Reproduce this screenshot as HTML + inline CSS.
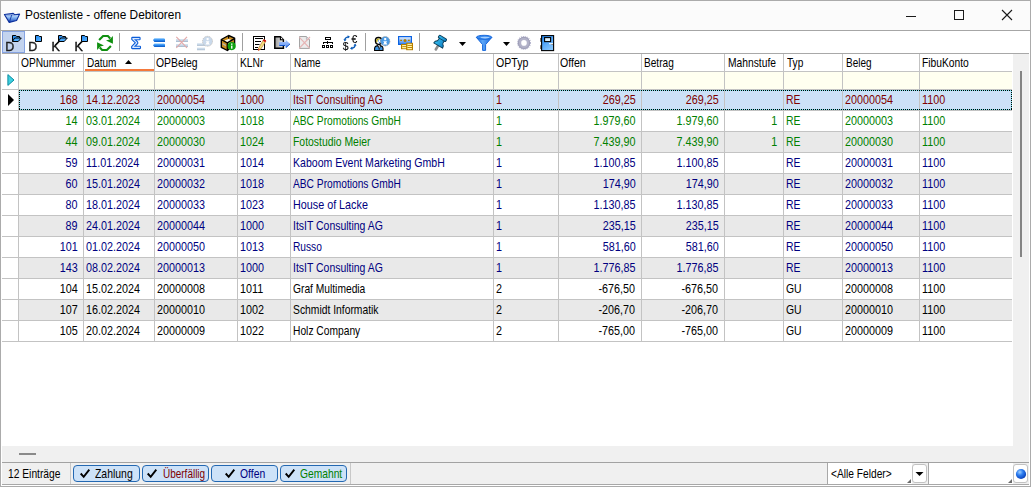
<!DOCTYPE html>
<html lang="de"><head><meta charset="utf-8"><title>Postenliste - offene Debitoren</title>
<style>
html,body{margin:0;padding:0;background:#fff}
body{width:1031px;height:487px;position:relative;overflow:hidden;font-family:"Liberation Sans",Arial,sans-serif}
#w{position:absolute;left:0;top:0;width:1031px;height:487px;overflow:hidden}
#w>div,#w>span,#w>svg{position:absolute;display:block}
.t{white-space:nowrap}
.focus{box-sizing:border-box;background:
 repeating-linear-gradient(90deg,#000 0 1px,#7fe6f2 1px 2px) top/100% 1px no-repeat,
 repeating-linear-gradient(90deg,#000 0 1px,#7fe6f2 1px 2px) bottom/100% 1px no-repeat,
 repeating-linear-gradient(180deg,#000 0 1px,#7fe6f2 1px 2px) left/1px 100% no-repeat,
 repeating-linear-gradient(180deg,#000 0 1px,#7fe6f2 1px 2px) right/1px 100% no-repeat}
.btn{box-sizing:border-box;border:1px solid #2368b2;border-radius:4px;background:#cde2f8}
</style></head><body><div id="w">
<div style="left:0px;top:0px;width:1031px;height:487px;background:#ababab;"></div>
<div style="left:1px;top:1px;width:1029px;height:29px;background:#fbfbfb;"></div>
<div style="left:1px;top:30px;width:1029px;height:1px;background:#a6a6a6;"></div>
<div style="left:1px;top:31px;width:1029px;height:22px;background:#ffffff;"></div>
<div style="left:2px;top:53px;width:1027px;height:1px;background:#a8a8a8;"></div>
<div style="left:2px;top:54px;width:1027px;height:392px;background:#f0f0f0;"></div>
<div style="left:1px;top:54px;width:1012px;height:392px;background:#ffffff;"></div>
<div style="left:2px;top:446px;width:1027px;height:16px;background:#f0f0f0;"></div>
<div style="left:19px;top:453px;width:17px;height:2px;background:#8a8a8a;"></div>
<div style="left:2px;top:462px;width:1027px;height:1px;background:#a2a2a2;"></div>
<div style="left:2px;top:463px;width:1027px;height:21px;background:#f0f0f0;"></div>
<div style="left:2px;top:484px;width:1027px;height:1px;background:#a8a8a8;"></div>
<div style="left:1px;top:485px;width:1029px;height:1px;background:#ffffff;"></div>
<div style="left:1px;top:31px;width:1px;height:455px;background:#ffffff;"></div>
<div style="left:1029px;top:31px;width:1px;height:455px;background:#ffffff;"></div>
<svg style="left:3px;top:11px" width="19" height="14" viewBox="3 11 19 14">
<defs><linearGradient id="tf" x1="0" y1="0" x2="0" y2="1"><stop offset="0" stop-color="#eaf3ff"/><stop offset="0.45" stop-color="#8ab8f2"/><stop offset="1" stop-color="#1648bc"/></linearGradient></defs>
<path d="M4.4 14.5 L13.2 13.4 L14.6 14.7 L19.6 14.1 L16.6 20.5 L9.2 22.4 Z" fill="url(#tf)" stroke="#0c2f9c" stroke-width="1.1" stroke-linejoin="round"/>
<path d="M11.7 15 L9.5 21.9" fill="none" stroke="#1038a4" stroke-width="0.9"/>
<path d="M5.2 14.9 L11.7 15 L14.4 14.9" fill="none" stroke="#2a56b8" stroke-width="0.6"/>
</svg>

<span class="t" style="left:24.7px;top:0px;line-height:30px;height:30px;font-size:12px;color:#000;transform:scaleX(0.988);transform-origin:0 50%">Postenliste - offene Debitoren</span>
<div style="left:906px;top:16px;width:10px;height:1px;background:#1a1a1a;"></div>
<div style="left:954px;top:10px;width:8px;height:8px;border:1px solid #1a1a1a;background:transparent"></div>
<svg style="left:1001px;top:9px" width="12" height="12" viewBox="0 0 12 12"><path d="M1 1 L11 11 M11 1 L1 11" stroke="#1a1a1a" stroke-width="1.1" fill="none"/></svg>
<div style="left:2px;top:31px;width:23px;height:22px;background:#c3d3ef;box-sizing:border-box;border:1px solid #86a3e2;"></div>
<div style="left:119px;top:33px;width:1px;height:18px;background:#a0a0a0;"></div>
<div style="left:242px;top:33px;width:1px;height:18px;background:#a0a0a0;"></div>
<div style="left:365px;top:33px;width:1px;height:18px;background:#a0a0a0;"></div>
<div style="left:419px;top:33px;width:1px;height:18px;background:#a0a0a0;"></div>
<svg style="left:0;top:31px;will-change:transform" width="1031" height="22" viewBox="0 0 1031 22" font-family="Liberation Sans, Arial, sans-serif">
<defs>
<linearGradient id="fo" x1="0" y1="0" x2="1" y2="1"><stop offset="0" stop-color="#1f86f0"/><stop offset="1" stop-color="#5ab4ff"/></linearGradient>
<linearGradient id="eqg" x1="0" y1="0" x2="0" y2="1"><stop offset="0" stop-color="#7cc2ff"/><stop offset="0.5" stop-color="#2a8af0"/><stop offset="1" stop-color="#0a56c4"/></linearGradient>
<linearGradient id="eqd" x1="0" y1="0" x2="0" y2="1"><stop offset="0" stop-color="#dbe7f2"/><stop offset="0.6" stop-color="#c2d3e4"/><stop offset="1" stop-color="#9fb2c6"/></linearGradient>
<linearGradient id="docg" x1="0" y1="0" x2="1" y2="0"><stop offset="0" stop-color="#9c9c9c"/><stop offset="1" stop-color="#ececec"/></linearGradient>
<linearGradient id="arg" x1="0" y1="0" x2="0" y2="1"><stop offset="0" stop-color="#a9c6fb"/><stop offset="0.6" stop-color="#7ea8f6"/><stop offset="1" stop-color="#0a4fc8"/></linearGradient>
<linearGradient id="cardg" x1="0" y1="0" x2="0" y2="1"><stop offset="0" stop-color="#f4f9ff"/><stop offset="1" stop-color="#2a7ef0"/></linearGradient>
<linearGradient id="nbg" x1="0" y1="0" x2="0.6" y2="1"><stop offset="0" stop-color="#1f86f2"/><stop offset="1" stop-color="#86c6ff"/></linearGradient>
<linearGradient id="fung" x1="0" y1="0" x2="1" y2="0"><stop offset="0" stop-color="#1f74e4"/><stop offset="0.4" stop-color="#5ca6f8"/><stop offset="1" stop-color="#1a68dc"/></linearGradient>
<linearGradient id="ping" x1="0" y1="0" x2="1" y2="0"><stop offset="0" stop-color="#35c0f0"/><stop offset="1" stop-color="#0f7ec4"/></linearGradient>
<radialGradient id="gearg" cx="0.5" cy="0.5" r="0.5"><stop offset="0.45" stop-color="#9c9cb8"/><stop offset="0.7" stop-color="#c6c6d8"/><stop offset="1" stop-color="#a8a8c0"/></radialGradient>
</defs>
<!-- 1: D + open folder -->
<g transform="translate(5,4)"><text x="0.2" y="16" font-size="12.5" fill="#1c1c1c" stroke="#1c1c1c" stroke-width="0.35">D</text><g><path d="M7.5 6.5 V0.5 H10.8 L11.6 1.5 H14.5 V3" fill="url(#fo)" stroke="#000" stroke-width="1"/><path d="M7.5 6.5 L9.6 3 H16.3 L13.2 6.5 Z" fill="#4aa8fa" stroke="#000" stroke-width="1" stroke-linejoin="round"/></g></g>
<!-- 2: D + closed folder -->
<g transform="translate(28,4)"><text x="0.2" y="16" font-size="12.5" fill="#1c1c1c" stroke="#1c1c1c" stroke-width="0.35">D</text><g><path d="M7.5 6.5 V0.5 H10.6 L11.4 1.5 H13.5 V6.5 Z" fill="url(#fo)" stroke="#000" stroke-width="1"/></g></g>
<!-- 3: K + open folder -->
<g transform="translate(51,4)"><path d="M4 10.5 L8.2 6.3" stroke="#111" stroke-width="1.35"/><text x="0.4" y="16" font-size="12.5" fill="#111" stroke="#111" stroke-width="0.4">K</text><g><path d="M7.5 6.5 V0.5 H10.8 L11.6 1.5 H14.5 V3" fill="url(#fo)" stroke="#000" stroke-width="1"/><path d="M7.5 6.5 L9.6 3 H16.3 L13.2 6.5 Z" fill="#4aa8fa" stroke="#000" stroke-width="1" stroke-linejoin="round"/></g></g>
<!-- 4: K + closed folder -->
<g transform="translate(74,4)"><path d="M4 10.5 L8.2 6.3" stroke="#111" stroke-width="1.35"/><text x="0.4" y="16" font-size="12.5" fill="#111" stroke="#111" stroke-width="0.4">K</text><g><path d="M7.5 6.5 V0.5 H10.6 L11.4 1.5 H13.5 V6.5 Z" fill="url(#fo)" stroke="#000" stroke-width="1"/></g></g>
<!-- 5: refresh -->
<g transform="translate(97,4)">
<g><path d="M2.1 5.1 L6.1 1.05 H10.9 L13.2 3.4" fill="none" stroke="#0f8f0f" stroke-width="2.1" stroke-linejoin="miter"/><path d="M15.9 0.9 V8.7 L9 5.4 L12.6 4.4 Z" fill="#0f8f0f"/></g>
<g transform="rotate(180 8 8)"><path d="M2.1 5.1 L6.1 1.05 H10.9 L13.2 3.4" fill="none" stroke="#0f8f0f" stroke-width="2.1" stroke-linejoin="miter"/><path d="M15.9 0.9 V8.7 L9 5.4 L12.6 4.4 Z" fill="#0f8f0f"/></g>
</g>
<!-- 6: sigma -->
<g transform="translate(128,4)"><text x="3.4" y="13.1" font-size="14.5" fill="#d8e8ff" stroke="#0a5cd8" stroke-width="2.3" stroke-linejoin="round" paint-order="stroke">Σ</text></g>
<!-- 7: equals -->
<g transform="translate(151,4)"><path d="M2 5 L3.4 3.2 H13 L14 4 V7 H3.4 Z" fill="url(#eqg)"/><path d="M2 10.2 L3.4 8.4 H13 L14 9.2 V12 H3.4 Z" fill="url(#eqg)"/></g>
<!-- 8: disabled equals with X -->
<g transform="translate(174,4)"><rect x="2" y="4" width="12" height="3" fill="url(#eqd)"/><rect x="2" y="9" width="12" height="3" fill="url(#eqd)"/><path d="M2.3 1.8 L13 12.8 M13 1.8 L2.3 12.8" stroke="#e2aaaa" stroke-width="1.2" fill="none"/></g>
<!-- 9: disabled bars + person circle -->
<g transform="translate(197,4)"><rect x="0" y="8.2" width="8" height="2.6" fill="url(#eqd)"/><rect x="0" y="12.6" width="8" height="2.6" fill="url(#eqd)"/><circle cx="10.5" cy="6.3" r="5" fill="#c9d9eb" stroke="#bdb6ae" stroke-width="0.8" stroke-dasharray="1.2 1"/><rect x="9.6" y="3" width="2" height="2.2" fill="#fff"/><path d="M8.6 6.2 H12.6 L11.6 7.6 L12.8 9.4 H8.4 L9.6 7.6 Z" fill="#fff"/></g>
<!-- 10: box with info -->
<g transform="translate(220,4)">
<path d="M1.3 4.5 L8.6 0.5 L14.6 3.2 V9 L7.4 15.5 L1.3 12.4 Z" fill="#c98d1e" stroke="#000" stroke-width="1.4" stroke-linejoin="round"/>
<path d="M4.6 5.6 L8.6 4 L11.8 5.2 L7.6 7.4 Z" fill="#fff"/>
<path d="M8.6 0.8 V3.6" stroke="#000" stroke-width="1.2" fill="none"/>
<path d="M1.5 4.7 L7.3 7.9 V15.2 M7.3 7.9 L14.4 3.6" stroke="#000" stroke-width="1.3" fill="none"/>
<path d="M2.6 8 L5.8 9.8 V11.3 L2.6 9.5 Z" fill="#b8b8b8"/>
<path d="M8.2 8.4 L11 6.8 V9 L8.2 11 Z" fill="#f4f4f4"/>
<circle cx="11.7" cy="11.1" r="4.1" fill="#10a010"/><rect x="11.05" y="8.5" width="1.4" height="1.3" fill="#fff"/><rect x="11.05" y="10.6" width="1.4" height="3.1" fill="#fff"/>
</g>
<!-- 11: document + pencil -->
<g transform="translate(251,4)">
<rect x="2.5" y="1.5" width="11" height="13" fill="#fff" stroke="#000" stroke-width="1"/>
<path d="M4 3.5 H12 M4 6.5 H10 M4 9.5 H8.5 M4 12.5 H7" stroke="#000" stroke-width="1"/>
<path d="M12.6 4.6 L15 6 L9.6 14.2 L7.4 15.6 L7.6 13 Z" fill="#f0e27e" stroke="#c8884a" stroke-width="0.8" stroke-linejoin="round"/>
<path d="M12.8 4.2 L15.2 5.6 L14.2 7.2 L11.8 5.8 Z" fill="#d01414"/>
<path d="M7.5 13.6 L8.9 14.6 L7.2 15.8 Z" fill="#e02020"/>
</g>
<!-- 12: document with arrow -->
<g transform="translate(274,4)">
<path d="M0.8 1.8 H6.4 L9.4 4.8 V13.2 H0.8 Z" fill="url(#docg)" stroke="#000" stroke-width="1.5" stroke-linejoin="miter"/>
<path d="M6.4 1.8 V4.8 H9.4" fill="#fff" stroke="#000" stroke-width="1.1"/>
<path d="M5 7 H11.6 V4.8 L16 8.8 L11.6 12.8 V10.6 H5 Z" fill="url(#arg)"/>
<path d="M5.4 10.5 H11 M16 8.9 L12 12.6" stroke="#0a4fc8" stroke-width="1" fill="none"/>
</g>
<!-- 13: disabled document with X -->
<g transform="translate(297,4)">
<path d="M2.5 1.5 H9.4 L12.5 4.4 V13.4 H2.5 Z" fill="#ececec" stroke="#a4a4a4" stroke-width="1"/>
<path d="M9.4 1.6 V4.4 H12.4" fill="#dfe3ee" stroke="#b0b0b0" stroke-width="0.8"/>
<path d="M2.4 2.4 L12.6 13.2 M13 2 L2.4 13.2" stroke="#e6b4b4" stroke-width="1.2" fill="none"/>
</g>
<!-- 14: org chart -->
<g transform="translate(320,4)" shape-rendering="crispEdges" fill="none" stroke="#000">
<rect x="5.5" y="2.5" width="5" height="2" stroke-width="1"/>
<path d="M7.5 6 V9 M3.5 9 V7.5 H12.5 V9" stroke-width="1"/>
<rect x="2.5" y="10.5" width="2" height="2"/><rect x="6.5" y="10.5" width="2" height="2"/><rect x="10.5" y="10.5" width="2" height="2"/>
</g>
<!-- 15: currency -->
<g transform="translate(343,4)">
<text x="8.6" y="7.8" font-size="10.4" fill="#000" stroke="#000" stroke-width="0.12">€</text>
<text x="-0.3" y="15.4" font-size="10.4" fill="#000" stroke="#000" stroke-width="0.12">$</text>
<path d="M1.8 5 Q2 2.2 5.4 1.8" stroke="#0a5ab8" stroke-width="1.3" fill="none"/><path d="M4.6 0.2 L7 1.8 L4.8 3.6 Z M0.4 4.2 L3.6 4.4 L1.8 6.6 Z" fill="#0a5ab8"/>
<path d="M12.2 10 Q12 12.8 8.6 13.4" stroke="#0a5ab8" stroke-width="1.3" fill="none"/><path d="M9.4 15 L7 13.4 L9.2 11.6 Z M13.6 10.8 L10.4 10.6 L12.2 8.4 Z" fill="#0a5ab8"/>
</g>
<!-- 16: person with badge -->
<g transform="translate(374,4)">
<path d="M1.5 5.6 Q1.3 2.5 4.4 2.4 Q7.6 2.3 7.6 5.6 V7.2 Q7 9.4 4.6 9.4 Q2.1 9.3 1.7 7.2 Z" fill="#fff" stroke="#000" stroke-width="1.5"/>
<path d="M2.3 7 V5.2 Q2.5 3.4 4.4 3.4 Q5.8 3.4 6.4 4.2 Q4.2 4.2 3.5 5.6 L3.3 7.2 Z" fill="#b4a400"/>
<rect x="4" y="5.4" width="1" height="1" fill="#1a6ad8"/><rect x="6" y="5.4" width="1" height="1" fill="#1a6ad8"/><rect x="5" y="7.2" width="1" height="1.1" fill="#1a6ad8"/>
<path d="M0.6 15.5 V13 Q0.8 11.2 3.4 10.6 L5 12.2 L6.2 10.6 Q8.8 11.2 9 13 V15.5 Z" fill="#3c92e2" stroke="#000" stroke-width="1.1"/>
<path d="M4.4 11 L5.2 14.6 L6.4 11" fill="#d8ecff" stroke="#000" stroke-width="0.6"/>
<circle cx="11.2" cy="6.3" r="4.7" fill="#4a9ae4" stroke="#a8a098" stroke-width="0.8" stroke-dasharray="1.2 1"/>
<rect x="10.2" y="3" width="2" height="2.2" fill="#fff"/><path d="M9.2 6.2 H13.2 L12.2 7.6 L13.4 9.4 H9 L10.2 7.6 Z" fill="#fff"/>
</g>
<!-- 17: card with coins -->
<g transform="translate(397,4)">
<rect x="1.6" y="1.6" width="12.8" height="7.8" fill="url(#cardg)" stroke="#0a62e2" stroke-width="1.2"/>
<path d="M3.2 5.4 H5 M11 5.4 H12.8" stroke="#b47c00" stroke-width="1.1"/><circle cx="8" cy="5.4" r="1.5" fill="#b47c00"/>
<rect x="4.5" y="9.5" width="5.4" height="4.2" fill="#ffe65a" stroke="#b47c00" stroke-width="1"/>
<path d="M5.4 11.6 H9.4" stroke="#b47c00" stroke-width="0.9"/><path d="M5.6 10.6 H9 M5.6 12.7 H9" stroke="#fffbe0" stroke-width="0.7"/>
<rect x="9.7" y="8.3" width="5.8" height="6.4" fill="#ffe65a" stroke="#b47c00" stroke-width="1"/>
<path d="M10.4 10.4 H15 M10.4 12.5 H15" stroke="#b47c00" stroke-width="0.9"/><path d="M10.8 9.4 H14.6 M10.8 11.5 H14.6 M10.8 13.6 H14.6" stroke="#fffbe0" stroke-width="0.7"/>
</g>
<!-- 18: pin -->
<g transform="translate(442.9,6.65) rotate(31)">
<path d="M0 9 V13.8" stroke="#8e8e8e" stroke-width="2.6" stroke-linecap="round"/>
<path d="M-4.3 0.2 Q-4.3 -0.5 -3.4 -0.5 H3.4 Q4.3 -0.5 4.3 0.2 V1.6 Q4.3 2.3 3.4 2.3 H2.7 L3 5.4 Q5.2 6.6 5.2 9.2 H-5.2 Q-5.2 6.6 -3 5.4 L-2.7 2.3 H-3.4 Q-4.3 2.3 -4.3 1.6 Z" fill="url(#ping)" stroke="#083a56" stroke-width="0.9" stroke-linejoin="round"/>
<path d="M-3.6 2.3 H3.6" stroke="#083a56" stroke-width="0.7"/>
</g>
<g transform="translate(459,11)"><path d="M0 0 H7 L3.5 4 Z" fill="#000"/></g>
<!-- 19: funnel -->
<g transform="translate(476,4)">
<path d="M0.4 2.4 L6.6 9.6 V15.4 H9.6 V9.6 L15.8 2.4 Z" fill="url(#fung)" stroke="#1868dc" stroke-width="1" stroke-linejoin="round"/>
<ellipse cx="8.1" cy="2.3" rx="7.7" ry="2" fill="#3a8cf0" stroke="#1868dc" stroke-width="1"/>
<ellipse cx="9" cy="2.6" rx="4.6" ry="0.8" fill="#a4ceff"/>
</g>
<g transform="translate(503,11)"><path d="M0 0 H7 L3.5 4 Z" fill="#000"/></g>
<!-- 20: gear (disabled) -->
<g transform="translate(516,4)">
<circle cx="8" cy="7.9" r="6.3" fill="none" stroke="#b4b4cc" stroke-width="1.4" stroke-dasharray="1.1 0.88"/>
<circle cx="8" cy="7.9" r="4.4" fill="none" stroke="url(#gearg)" stroke-width="3.2"/>
<circle cx="8" cy="7.9" r="4.5" fill="none" stroke="#b2b2c8" stroke-width="2.8"/>
<circle cx="8" cy="7.9" r="5.6" fill="none" stroke="#9c9cb6" stroke-width="0.9"/>
</g>
<!-- 21: notebook -->
<g transform="translate(539,4)">
<rect x="1" y="3" width="2" height="3.8" fill="#7c746c"/><rect x="1" y="10.2" width="2" height="3.8" fill="#7c746c"/>
<rect x="2.6" y="0.6" width="12" height="15" fill="url(#nbg)" stroke="#000" stroke-width="1.1"/>
<rect x="5.6" y="2.6" width="6" height="4" fill="#dcf2ff" stroke="#000" stroke-width="1.1"/>
<rect x="10" y="8.2" width="4" height="1" fill="#fff"/><rect x="12.4" y="9.2" width="1.6" height="0.8" fill="#8c7c6c"/>
</g>
</svg>

<div style="left:2px;top:71px;width:1010px;height:1px;background:#c3c3c3;"></div>
<div style="left:19px;top:72px;width:993px;height:17px;background:#fffff0;"></div>
<div style="left:2px;top:89px;width:1010px;height:1px;background:#c3c3c3;"></div>
<div style="left:19px;top:90px;width:993px;height:20px;background:#cce1f7;"></div>
<div style="left:2px;top:110px;width:1010px;height:1px;background:#c3c3c3;"></div>
<div style="left:2px;top:131px;width:1010px;height:1px;background:#c3c3c3;"></div>
<div style="left:19px;top:132px;width:993px;height:20px;background:#e9e9e9;"></div>
<div style="left:2px;top:152px;width:1010px;height:1px;background:#c3c3c3;"></div>
<div style="left:2px;top:173px;width:1010px;height:1px;background:#c3c3c3;"></div>
<div style="left:19px;top:174px;width:993px;height:20px;background:#e9e9e9;"></div>
<div style="left:2px;top:194px;width:1010px;height:1px;background:#c3c3c3;"></div>
<div style="left:2px;top:215px;width:1010px;height:1px;background:#c3c3c3;"></div>
<div style="left:19px;top:216px;width:993px;height:20px;background:#e9e9e9;"></div>
<div style="left:2px;top:236px;width:1010px;height:1px;background:#c3c3c3;"></div>
<div style="left:2px;top:257px;width:1010px;height:1px;background:#c3c3c3;"></div>
<div style="left:19px;top:258px;width:993px;height:20px;background:#e9e9e9;"></div>
<div style="left:2px;top:278px;width:1010px;height:1px;background:#c3c3c3;"></div>
<div style="left:2px;top:299px;width:1010px;height:1px;background:#c3c3c3;"></div>
<div style="left:19px;top:300px;width:993px;height:20px;background:#e9e9e9;"></div>
<div style="left:2px;top:320px;width:1010px;height:1px;background:#c3c3c3;"></div>
<div style="left:2px;top:341px;width:1010px;height:1px;background:#c3c3c3;"></div>
<div style="left:18px;top:54px;width:1px;height:287px;background:#c3c3c3;"></div>
<div style="left:83px;top:54px;width:1px;height:287px;background:#c3c3c3;"></div>
<div style="left:154px;top:54px;width:1px;height:287px;background:#c3c3c3;"></div>
<div style="left:237px;top:54px;width:1px;height:287px;background:#c3c3c3;"></div>
<div style="left:290px;top:54px;width:1px;height:287px;background:#c3c3c3;"></div>
<div style="left:493px;top:54px;width:1px;height:287px;background:#c3c3c3;"></div>
<div style="left:558px;top:54px;width:1px;height:287px;background:#c3c3c3;"></div>
<div style="left:641px;top:54px;width:1px;height:287px;background:#c3c3c3;"></div>
<div style="left:724px;top:54px;width:1px;height:287px;background:#c3c3c3;"></div>
<div style="left:783px;top:54px;width:1px;height:287px;background:#c3c3c3;"></div>
<div style="left:842px;top:54px;width:1px;height:287px;background:#c3c3c3;"></div>
<div style="left:919px;top:54px;width:1px;height:287px;background:#c3c3c3;"></div>
<div class="focus" style="left:19px;top:90px;width:993px;height:20px"></div>
<span class="t" style="left:20.70px;top:54px;line-height:17px;height:17px;color:#000;font-size:13px;transform:scaleX(0.7840);transform-origin:0 50%;">OPNummer</span>
<span class="t" style="left:86.60px;top:54px;line-height:17px;height:17px;color:#000;font-size:13px;transform:scaleX(0.7686);transform-origin:0 50%;">Datum</span>
<span class="t" style="left:156.40px;top:54px;line-height:17px;height:17px;color:#000;font-size:13px;transform:scaleX(0.8000);transform-origin:0 50%;">OPBeleg</span>
<span class="t" style="left:240.10px;top:54px;line-height:17px;height:17px;color:#000;font-size:13px;transform:scaleX(0.7899);transform-origin:0 50%;">KLNr</span>
<span class="t" style="left:293.60px;top:54px;line-height:17px;height:17px;color:#000;font-size:13px;transform:scaleX(0.7625);transform-origin:0 50%;">Name</span>
<span class="t" style="left:495.60px;top:54px;line-height:17px;height:17px;color:#000;font-size:13px;transform:scaleX(0.8126);transform-origin:0 50%;">OPTyp</span>
<span class="t" style="left:560.30px;top:54px;line-height:17px;height:17px;color:#000;font-size:13px;transform:scaleX(0.8159);transform-origin:0 50%;">Offen</span>
<span class="t" style="left:644.40px;top:54px;line-height:17px;height:17px;color:#000;font-size:13px;transform:scaleX(0.7765);transform-origin:0 50%;">Betrag</span>
<span class="t" style="left:727.80px;top:54px;line-height:17px;height:17px;color:#000;font-size:13px;transform:scaleX(0.7901);transform-origin:0 50%;">Mahnstufe</span>
<span class="t" style="left:786.80px;top:54px;line-height:17px;height:17px;color:#000;font-size:13px;transform:scaleX(0.7762);transform-origin:0 50%;">Typ</span>
<span class="t" style="left:845.60px;top:54px;line-height:17px;height:17px;color:#000;font-size:13px;transform:scaleX(0.7699);transform-origin:0 50%;">Beleg</span>
<span class="t" style="left:922.20px;top:54px;line-height:17px;height:17px;color:#000;font-size:13px;transform:scaleX(0.7899);transform-origin:0 50%;">FibuKonto</span>
<svg style="left:125px;top:60px" width="7" height="4" viewBox="0 0 7 4"><path d="M0 4 L3.5 0 L7 4 Z" fill="#000"/></svg>
<div style="left:85px;top:69px;width:69px;height:2px;background:#f4793b;"></div>
<svg style="left:7px;top:73px" width="9" height="14" viewBox="0 0 9 14"><path d="M0.9 1.6 L7 7 L0.9 12.4 Z" fill="#3fd0e0" stroke="#0a8ca0" stroke-width="1"/></svg>
<svg style="left:7px;top:92.5px" width="8" height="14" viewBox="0 0 8 14"><path d="M1 1 L7 7 L1 13 Z" fill="#000"/></svg>
<span class="t" style="right:953.55px;top:90px;line-height:20px;height:20px;color:#800000;font-size:13px;transform:scaleX(0.8300);transform-origin:100% 50%;">168</span>
<span class="t" style="left:86.30px;top:90px;line-height:20px;height:20px;color:#800000;font-size:13px;transform:scaleX(0.8300);transform-origin:0 50%;">14.12.2023</span>
<span class="t" style="left:157.30px;top:90px;line-height:20px;height:20px;color:#800000;font-size:13px;transform:scaleX(0.8300);transform-origin:0 50%;">20000054</span>
<span class="t" style="left:240.30px;top:90px;line-height:20px;height:20px;color:#800000;font-size:13px;transform:scaleX(0.8300);transform-origin:0 50%;">1000</span>
<span class="t" style="left:293.30px;top:90px;line-height:20px;height:20px;color:#800000;font-size:13px;transform:scaleX(0.8036);transform-origin:0 50%;">ItsIT Consulting AG</span>
<span class="t" style="left:496.30px;top:90px;line-height:20px;height:20px;color:#800000;font-size:13px;transform:scaleX(0.8300);transform-origin:0 50%;">1</span>
<span class="t" style="right:395.49px;top:90px;line-height:20px;height:20px;color:#800000;font-size:13px;transform:scaleX(0.8300);transform-origin:100% 50%;">269,25</span>
<span class="t" style="right:312.49px;top:90px;line-height:20px;height:20px;color:#800000;font-size:13px;transform:scaleX(0.8300);transform-origin:100% 50%;">269,25</span>
<span class="t" style="left:786.30px;top:90px;line-height:20px;height:20px;color:#800000;font-size:13px;transform:scaleX(0.8000);transform-origin:0 50%;">RE</span>
<span class="t" style="left:845.30px;top:90px;line-height:20px;height:20px;color:#800000;font-size:13px;transform:scaleX(0.8300);transform-origin:0 50%;">20000054</span>
<span class="t" style="left:922.30px;top:90px;line-height:20px;height:20px;color:#800000;font-size:13px;transform:scaleX(0.8300);transform-origin:0 50%;">1100</span>
<span class="t" style="right:953.53px;top:111px;line-height:20px;height:20px;color:#008000;font-size:13px;transform:scaleX(0.8300);transform-origin:100% 50%;">14</span>
<span class="t" style="left:86.30px;top:111px;line-height:20px;height:20px;color:#008000;font-size:13px;transform:scaleX(0.8300);transform-origin:0 50%;">03.01.2024</span>
<span class="t" style="left:157.30px;top:111px;line-height:20px;height:20px;color:#008000;font-size:13px;transform:scaleX(0.8300);transform-origin:0 50%;">20000003</span>
<span class="t" style="left:240.30px;top:111px;line-height:20px;height:20px;color:#008000;font-size:13px;transform:scaleX(0.8300);transform-origin:0 50%;">1018</span>
<span class="t" style="left:293.20px;top:111px;line-height:20px;height:20px;color:#008000;font-size:13px;transform:scaleX(0.7854);transform-origin:0 50%;">ABC Promotions GmbH</span>
<span class="t" style="left:496.30px;top:111px;line-height:20px;height:20px;color:#008000;font-size:13px;transform:scaleX(0.8300);transform-origin:0 50%;">1</span>
<span class="t" style="right:395.52px;top:111px;line-height:20px;height:20px;color:#008000;font-size:13px;transform:scaleX(0.8300);transform-origin:100% 50%;">1.979,60</span>
<span class="t" style="right:312.52px;top:111px;line-height:20px;height:20px;color:#008000;font-size:13px;transform:scaleX(0.8300);transform-origin:100% 50%;">1.979,60</span>
<span class="t" style="right:253.52px;top:111px;line-height:20px;height:20px;color:#008000;font-size:13px;transform:scaleX(0.8300);transform-origin:100% 50%;">1</span>
<span class="t" style="left:786.30px;top:111px;line-height:20px;height:20px;color:#008000;font-size:13px;transform:scaleX(0.8000);transform-origin:0 50%;">RE</span>
<span class="t" style="left:845.30px;top:111px;line-height:20px;height:20px;color:#008000;font-size:13px;transform:scaleX(0.8300);transform-origin:0 50%;">20000003</span>
<span class="t" style="left:922.30px;top:111px;line-height:20px;height:20px;color:#008000;font-size:13px;transform:scaleX(0.8300);transform-origin:0 50%;">1100</span>
<span class="t" style="right:953.53px;top:132px;line-height:20px;height:20px;color:#008000;font-size:13px;transform:scaleX(0.8300);transform-origin:100% 50%;">44</span>
<span class="t" style="left:86.30px;top:132px;line-height:20px;height:20px;color:#008000;font-size:13px;transform:scaleX(0.8300);transform-origin:0 50%;">09.01.2024</span>
<span class="t" style="left:157.30px;top:132px;line-height:20px;height:20px;color:#008000;font-size:13px;transform:scaleX(0.8300);transform-origin:0 50%;">20000030</span>
<span class="t" style="left:240.30px;top:132px;line-height:20px;height:20px;color:#008000;font-size:13px;transform:scaleX(0.8300);transform-origin:0 50%;">1024</span>
<span class="t" style="left:293.30px;top:132px;line-height:20px;height:20px;color:#008000;font-size:13px;transform:scaleX(0.8000);transform-origin:0 50%;">Fotostudio Meier</span>
<span class="t" style="left:496.30px;top:132px;line-height:20px;height:20px;color:#008000;font-size:13px;transform:scaleX(0.8300);transform-origin:0 50%;">1</span>
<span class="t" style="right:395.52px;top:132px;line-height:20px;height:20px;color:#008000;font-size:13px;transform:scaleX(0.8300);transform-origin:100% 50%;">7.439,90</span>
<span class="t" style="right:312.52px;top:132px;line-height:20px;height:20px;color:#008000;font-size:13px;transform:scaleX(0.8300);transform-origin:100% 50%;">7.439,90</span>
<span class="t" style="right:253.52px;top:132px;line-height:20px;height:20px;color:#008000;font-size:13px;transform:scaleX(0.8300);transform-origin:100% 50%;">1</span>
<span class="t" style="left:786.30px;top:132px;line-height:20px;height:20px;color:#008000;font-size:13px;transform:scaleX(0.8000);transform-origin:0 50%;">RE</span>
<span class="t" style="left:845.30px;top:132px;line-height:20px;height:20px;color:#008000;font-size:13px;transform:scaleX(0.8300);transform-origin:0 50%;">20000030</span>
<span class="t" style="left:922.30px;top:132px;line-height:20px;height:20px;color:#008000;font-size:13px;transform:scaleX(0.8300);transform-origin:0 50%;">1100</span>
<span class="t" style="right:953.53px;top:153px;line-height:20px;height:20px;color:#000080;font-size:13px;transform:scaleX(0.8300);transform-origin:100% 50%;">59</span>
<span class="t" style="left:86.30px;top:153px;line-height:20px;height:20px;color:#000080;font-size:13px;transform:scaleX(0.8300);transform-origin:0 50%;">11.01.2024</span>
<span class="t" style="left:157.30px;top:153px;line-height:20px;height:20px;color:#000080;font-size:13px;transform:scaleX(0.8300);transform-origin:0 50%;">20000031</span>
<span class="t" style="left:240.30px;top:153px;line-height:20px;height:20px;color:#000080;font-size:13px;transform:scaleX(0.8300);transform-origin:0 50%;">1014</span>
<span class="t" style="left:293.30px;top:153px;line-height:20px;height:20px;color:#000080;font-size:13px;transform:scaleX(0.8112);transform-origin:0 50%;">Kaboom Event Marketing GmbH</span>
<span class="t" style="left:496.30px;top:153px;line-height:20px;height:20px;color:#000080;font-size:13px;transform:scaleX(0.8300);transform-origin:0 50%;">1</span>
<span class="t" style="right:395.52px;top:153px;line-height:20px;height:20px;color:#000080;font-size:13px;transform:scaleX(0.8300);transform-origin:100% 50%;">1.100,85</span>
<span class="t" style="right:312.52px;top:153px;line-height:20px;height:20px;color:#000080;font-size:13px;transform:scaleX(0.8300);transform-origin:100% 50%;">1.100,85</span>
<span class="t" style="left:786.30px;top:153px;line-height:20px;height:20px;color:#000080;font-size:13px;transform:scaleX(0.8000);transform-origin:0 50%;">RE</span>
<span class="t" style="left:845.30px;top:153px;line-height:20px;height:20px;color:#000080;font-size:13px;transform:scaleX(0.8300);transform-origin:0 50%;">20000031</span>
<span class="t" style="left:922.30px;top:153px;line-height:20px;height:20px;color:#000080;font-size:13px;transform:scaleX(0.8300);transform-origin:0 50%;">1100</span>
<span class="t" style="right:953.53px;top:174px;line-height:20px;height:20px;color:#000080;font-size:13px;transform:scaleX(0.8300);transform-origin:100% 50%;">60</span>
<span class="t" style="left:86.30px;top:174px;line-height:20px;height:20px;color:#000080;font-size:13px;transform:scaleX(0.8300);transform-origin:0 50%;">15.01.2024</span>
<span class="t" style="left:157.30px;top:174px;line-height:20px;height:20px;color:#000080;font-size:13px;transform:scaleX(0.8300);transform-origin:0 50%;">20000032</span>
<span class="t" style="left:240.30px;top:174px;line-height:20px;height:20px;color:#000080;font-size:13px;transform:scaleX(0.8300);transform-origin:0 50%;">1018</span>
<span class="t" style="left:293.20px;top:174px;line-height:20px;height:20px;color:#000080;font-size:13px;transform:scaleX(0.7854);transform-origin:0 50%;">ABC Promotions GmbH</span>
<span class="t" style="left:496.30px;top:174px;line-height:20px;height:20px;color:#000080;font-size:13px;transform:scaleX(0.8300);transform-origin:0 50%;">1</span>
<span class="t" style="right:395.49px;top:174px;line-height:20px;height:20px;color:#000080;font-size:13px;transform:scaleX(0.8300);transform-origin:100% 50%;">174,90</span>
<span class="t" style="right:312.49px;top:174px;line-height:20px;height:20px;color:#000080;font-size:13px;transform:scaleX(0.8300);transform-origin:100% 50%;">174,90</span>
<span class="t" style="left:786.30px;top:174px;line-height:20px;height:20px;color:#000080;font-size:13px;transform:scaleX(0.8000);transform-origin:0 50%;">RE</span>
<span class="t" style="left:845.30px;top:174px;line-height:20px;height:20px;color:#000080;font-size:13px;transform:scaleX(0.8300);transform-origin:0 50%;">20000032</span>
<span class="t" style="left:922.30px;top:174px;line-height:20px;height:20px;color:#000080;font-size:13px;transform:scaleX(0.8300);transform-origin:0 50%;">1100</span>
<span class="t" style="right:953.53px;top:195px;line-height:20px;height:20px;color:#000080;font-size:13px;transform:scaleX(0.8300);transform-origin:100% 50%;">80</span>
<span class="t" style="left:86.30px;top:195px;line-height:20px;height:20px;color:#000080;font-size:13px;transform:scaleX(0.8300);transform-origin:0 50%;">18.01.2024</span>
<span class="t" style="left:157.30px;top:195px;line-height:20px;height:20px;color:#000080;font-size:13px;transform:scaleX(0.8300);transform-origin:0 50%;">20000033</span>
<span class="t" style="left:240.30px;top:195px;line-height:20px;height:20px;color:#000080;font-size:13px;transform:scaleX(0.8300);transform-origin:0 50%;">1023</span>
<span class="t" style="left:293.30px;top:195px;line-height:20px;height:20px;color:#000080;font-size:13px;transform:scaleX(0.8288);transform-origin:0 50%;">House of Lacke</span>
<span class="t" style="left:496.30px;top:195px;line-height:20px;height:20px;color:#000080;font-size:13px;transform:scaleX(0.8300);transform-origin:0 50%;">1</span>
<span class="t" style="right:395.52px;top:195px;line-height:20px;height:20px;color:#000080;font-size:13px;transform:scaleX(0.8300);transform-origin:100% 50%;">1.130,85</span>
<span class="t" style="right:312.52px;top:195px;line-height:20px;height:20px;color:#000080;font-size:13px;transform:scaleX(0.8300);transform-origin:100% 50%;">1.130,85</span>
<span class="t" style="left:786.30px;top:195px;line-height:20px;height:20px;color:#000080;font-size:13px;transform:scaleX(0.8000);transform-origin:0 50%;">RE</span>
<span class="t" style="left:845.30px;top:195px;line-height:20px;height:20px;color:#000080;font-size:13px;transform:scaleX(0.8300);transform-origin:0 50%;">20000033</span>
<span class="t" style="left:922.30px;top:195px;line-height:20px;height:20px;color:#000080;font-size:13px;transform:scaleX(0.8300);transform-origin:0 50%;">1100</span>
<span class="t" style="right:953.53px;top:216px;line-height:20px;height:20px;color:#000080;font-size:13px;transform:scaleX(0.8300);transform-origin:100% 50%;">89</span>
<span class="t" style="left:86.30px;top:216px;line-height:20px;height:20px;color:#000080;font-size:13px;transform:scaleX(0.8300);transform-origin:0 50%;">24.01.2024</span>
<span class="t" style="left:157.30px;top:216px;line-height:20px;height:20px;color:#000080;font-size:13px;transform:scaleX(0.8300);transform-origin:0 50%;">20000044</span>
<span class="t" style="left:240.30px;top:216px;line-height:20px;height:20px;color:#000080;font-size:13px;transform:scaleX(0.8300);transform-origin:0 50%;">1000</span>
<span class="t" style="left:293.30px;top:216px;line-height:20px;height:20px;color:#000080;font-size:13px;transform:scaleX(0.8036);transform-origin:0 50%;">ItsIT Consulting AG</span>
<span class="t" style="left:496.30px;top:216px;line-height:20px;height:20px;color:#000080;font-size:13px;transform:scaleX(0.8300);transform-origin:0 50%;">1</span>
<span class="t" style="right:395.49px;top:216px;line-height:20px;height:20px;color:#000080;font-size:13px;transform:scaleX(0.8300);transform-origin:100% 50%;">235,15</span>
<span class="t" style="right:312.49px;top:216px;line-height:20px;height:20px;color:#000080;font-size:13px;transform:scaleX(0.8300);transform-origin:100% 50%;">235,15</span>
<span class="t" style="left:786.30px;top:216px;line-height:20px;height:20px;color:#000080;font-size:13px;transform:scaleX(0.8000);transform-origin:0 50%;">RE</span>
<span class="t" style="left:845.30px;top:216px;line-height:20px;height:20px;color:#000080;font-size:13px;transform:scaleX(0.8300);transform-origin:0 50%;">20000044</span>
<span class="t" style="left:922.30px;top:216px;line-height:20px;height:20px;color:#000080;font-size:13px;transform:scaleX(0.8300);transform-origin:0 50%;">1100</span>
<span class="t" style="right:953.55px;top:237px;line-height:20px;height:20px;color:#000080;font-size:13px;transform:scaleX(0.8300);transform-origin:100% 50%;">101</span>
<span class="t" style="left:86.30px;top:237px;line-height:20px;height:20px;color:#000080;font-size:13px;transform:scaleX(0.8300);transform-origin:0 50%;">01.02.2024</span>
<span class="t" style="left:157.30px;top:237px;line-height:20px;height:20px;color:#000080;font-size:13px;transform:scaleX(0.8300);transform-origin:0 50%;">20000050</span>
<span class="t" style="left:240.30px;top:237px;line-height:20px;height:20px;color:#000080;font-size:13px;transform:scaleX(0.8300);transform-origin:0 50%;">1013</span>
<span class="t" style="left:293.30px;top:237px;line-height:20px;height:20px;color:#000080;font-size:13px;transform:scaleX(0.7837);transform-origin:0 50%;">Russo</span>
<span class="t" style="left:496.30px;top:237px;line-height:20px;height:20px;color:#000080;font-size:13px;transform:scaleX(0.8300);transform-origin:0 50%;">1</span>
<span class="t" style="right:395.49px;top:237px;line-height:20px;height:20px;color:#000080;font-size:13px;transform:scaleX(0.8300);transform-origin:100% 50%;">581,60</span>
<span class="t" style="right:312.49px;top:237px;line-height:20px;height:20px;color:#000080;font-size:13px;transform:scaleX(0.8300);transform-origin:100% 50%;">581,60</span>
<span class="t" style="left:786.30px;top:237px;line-height:20px;height:20px;color:#000080;font-size:13px;transform:scaleX(0.8000);transform-origin:0 50%;">RE</span>
<span class="t" style="left:845.30px;top:237px;line-height:20px;height:20px;color:#000080;font-size:13px;transform:scaleX(0.8300);transform-origin:0 50%;">20000050</span>
<span class="t" style="left:922.30px;top:237px;line-height:20px;height:20px;color:#000080;font-size:13px;transform:scaleX(0.8300);transform-origin:0 50%;">1100</span>
<span class="t" style="right:953.55px;top:258px;line-height:20px;height:20px;color:#000080;font-size:13px;transform:scaleX(0.8300);transform-origin:100% 50%;">143</span>
<span class="t" style="left:86.30px;top:258px;line-height:20px;height:20px;color:#000080;font-size:13px;transform:scaleX(0.8300);transform-origin:0 50%;">08.02.2024</span>
<span class="t" style="left:157.30px;top:258px;line-height:20px;height:20px;color:#000080;font-size:13px;transform:scaleX(0.8300);transform-origin:0 50%;">20000013</span>
<span class="t" style="left:240.30px;top:258px;line-height:20px;height:20px;color:#000080;font-size:13px;transform:scaleX(0.8300);transform-origin:0 50%;">1000</span>
<span class="t" style="left:293.30px;top:258px;line-height:20px;height:20px;color:#000080;font-size:13px;transform:scaleX(0.8036);transform-origin:0 50%;">ItsIT Consulting AG</span>
<span class="t" style="left:496.30px;top:258px;line-height:20px;height:20px;color:#000080;font-size:13px;transform:scaleX(0.8300);transform-origin:0 50%;">1</span>
<span class="t" style="right:395.52px;top:258px;line-height:20px;height:20px;color:#000080;font-size:13px;transform:scaleX(0.8300);transform-origin:100% 50%;">1.776,85</span>
<span class="t" style="right:312.52px;top:258px;line-height:20px;height:20px;color:#000080;font-size:13px;transform:scaleX(0.8300);transform-origin:100% 50%;">1.776,85</span>
<span class="t" style="left:786.30px;top:258px;line-height:20px;height:20px;color:#000080;font-size:13px;transform:scaleX(0.8000);transform-origin:0 50%;">RE</span>
<span class="t" style="left:845.30px;top:258px;line-height:20px;height:20px;color:#000080;font-size:13px;transform:scaleX(0.8300);transform-origin:0 50%;">20000013</span>
<span class="t" style="left:922.30px;top:258px;line-height:20px;height:20px;color:#000080;font-size:13px;transform:scaleX(0.8300);transform-origin:0 50%;">1100</span>
<span class="t" style="right:953.55px;top:279px;line-height:20px;height:20px;color:#000000;font-size:13px;transform:scaleX(0.8300);transform-origin:100% 50%;">104</span>
<span class="t" style="left:86.30px;top:279px;line-height:20px;height:20px;color:#000000;font-size:13px;transform:scaleX(0.8300);transform-origin:0 50%;">15.02.2024</span>
<span class="t" style="left:157.30px;top:279px;line-height:20px;height:20px;color:#000000;font-size:13px;transform:scaleX(0.8300);transform-origin:0 50%;">20000008</span>
<span class="t" style="left:240.30px;top:279px;line-height:20px;height:20px;color:#000000;font-size:13px;transform:scaleX(0.8300);transform-origin:0 50%;">1011</span>
<span class="t" style="left:292.60px;top:279px;line-height:20px;height:20px;color:#000000;font-size:13px;transform:scaleX(0.7880);transform-origin:0 50%;">Graf Multimedia</span>
<span class="t" style="left:496.30px;top:279px;line-height:20px;height:20px;color:#000000;font-size:13px;transform:scaleX(0.8300);transform-origin:0 50%;">2</span>
<span class="t" style="right:395.53px;top:279px;line-height:20px;height:20px;color:#000000;font-size:13px;transform:scaleX(0.8300);transform-origin:100% 50%;">-676,50</span>
<span class="t" style="right:312.53px;top:279px;line-height:20px;height:20px;color:#000000;font-size:13px;transform:scaleX(0.8300);transform-origin:100% 50%;">-676,50</span>
<span class="t" style="left:786.30px;top:279px;line-height:20px;height:20px;color:#000000;font-size:13px;transform:scaleX(0.8000);transform-origin:0 50%;">GU</span>
<span class="t" style="left:845.30px;top:279px;line-height:20px;height:20px;color:#000000;font-size:13px;transform:scaleX(0.8300);transform-origin:0 50%;">20000008</span>
<span class="t" style="left:922.30px;top:279px;line-height:20px;height:20px;color:#000000;font-size:13px;transform:scaleX(0.8300);transform-origin:0 50%;">1100</span>
<span class="t" style="right:953.55px;top:300px;line-height:20px;height:20px;color:#000000;font-size:13px;transform:scaleX(0.8300);transform-origin:100% 50%;">107</span>
<span class="t" style="left:86.30px;top:300px;line-height:20px;height:20px;color:#000000;font-size:13px;transform:scaleX(0.8300);transform-origin:0 50%;">16.02.2024</span>
<span class="t" style="left:157.30px;top:300px;line-height:20px;height:20px;color:#000000;font-size:13px;transform:scaleX(0.8300);transform-origin:0 50%;">20000010</span>
<span class="t" style="left:240.30px;top:300px;line-height:20px;height:20px;color:#000000;font-size:13px;transform:scaleX(0.8300);transform-origin:0 50%;">1002</span>
<span class="t" style="left:293.00px;top:300px;line-height:20px;height:20px;color:#000000;font-size:13px;transform:scaleX(0.7944);transform-origin:0 50%;">Schmidt Informatik</span>
<span class="t" style="left:496.30px;top:300px;line-height:20px;height:20px;color:#000000;font-size:13px;transform:scaleX(0.8300);transform-origin:0 50%;">2</span>
<span class="t" style="right:395.53px;top:300px;line-height:20px;height:20px;color:#000000;font-size:13px;transform:scaleX(0.8300);transform-origin:100% 50%;">-206,70</span>
<span class="t" style="right:312.53px;top:300px;line-height:20px;height:20px;color:#000000;font-size:13px;transform:scaleX(0.8300);transform-origin:100% 50%;">-206,70</span>
<span class="t" style="left:786.30px;top:300px;line-height:20px;height:20px;color:#000000;font-size:13px;transform:scaleX(0.8000);transform-origin:0 50%;">GU</span>
<span class="t" style="left:845.30px;top:300px;line-height:20px;height:20px;color:#000000;font-size:13px;transform:scaleX(0.8300);transform-origin:0 50%;">20000010</span>
<span class="t" style="left:922.30px;top:300px;line-height:20px;height:20px;color:#000000;font-size:13px;transform:scaleX(0.8300);transform-origin:0 50%;">1100</span>
<span class="t" style="right:953.55px;top:321px;line-height:20px;height:20px;color:#000000;font-size:13px;transform:scaleX(0.8300);transform-origin:100% 50%;">105</span>
<span class="t" style="left:86.30px;top:321px;line-height:20px;height:20px;color:#000000;font-size:13px;transform:scaleX(0.8300);transform-origin:0 50%;">20.02.2024</span>
<span class="t" style="left:157.30px;top:321px;line-height:20px;height:20px;color:#000000;font-size:13px;transform:scaleX(0.8300);transform-origin:0 50%;">20000009</span>
<span class="t" style="left:240.30px;top:321px;line-height:20px;height:20px;color:#000000;font-size:13px;transform:scaleX(0.8300);transform-origin:0 50%;">1022</span>
<span class="t" style="left:293.30px;top:321px;line-height:20px;height:20px;color:#000000;font-size:13px;transform:scaleX(0.7883);transform-origin:0 50%;">Holz Company</span>
<span class="t" style="left:496.30px;top:321px;line-height:20px;height:20px;color:#000000;font-size:13px;transform:scaleX(0.8300);transform-origin:0 50%;">2</span>
<span class="t" style="right:395.53px;top:321px;line-height:20px;height:20px;color:#000000;font-size:13px;transform:scaleX(0.8300);transform-origin:100% 50%;">-765,00</span>
<span class="t" style="right:312.53px;top:321px;line-height:20px;height:20px;color:#000000;font-size:13px;transform:scaleX(0.8300);transform-origin:100% 50%;">-765,00</span>
<span class="t" style="left:786.30px;top:321px;line-height:20px;height:20px;color:#000000;font-size:13px;transform:scaleX(0.8000);transform-origin:0 50%;">GU</span>
<span class="t" style="left:845.30px;top:321px;line-height:20px;height:20px;color:#000000;font-size:13px;transform:scaleX(0.8300);transform-origin:0 50%;">20000009</span>
<span class="t" style="left:922.30px;top:321px;line-height:20px;height:20px;color:#000000;font-size:13px;transform:scaleX(0.8300);transform-origin:0 50%;">1100</span>
<div style="left:1020px;top:71px;width:2px;height:186px;background:#848484;"></div>
<span class="t" style="left:7.70px;top:463px;line-height:21px;height:21px;color:#000;font-size:13px;transform:scaleX(0.7895);transform-origin:0 50%;">12 Einträge</span>
<div style="left:70px;top:463px;width:1px;height:21px;background:#c8c8c8;"></div>
<div class="btn" style="left:73px;top:465px;width:67px;height:17px"></div>
<svg style="left:78.9px;top:468px" width="12" height="11" viewBox="-1 -1 12 11"><path d="M0.7 4.5 L3.7 7.8 L9.3 0.7" fill="none" stroke="#000" stroke-width="1.9" stroke-linejoin="miter"/></svg>
<span class="t" style="left:95.30px;top:463px;line-height:21px;height:21px;color:#000000;font-size:13px;transform:scaleX(0.8021);transform-origin:0 50%;">Zahlung</span>
<div class="btn" style="left:142px;top:465px;width:67px;height:17px"></div>
<svg style="left:145.9px;top:468px" width="12" height="11" viewBox="-1 -1 12 11"><path d="M0.7 4.5 L3.7 7.8 L9.3 0.7" fill="none" stroke="#000" stroke-width="1.9" stroke-linejoin="miter"/></svg>
<span class="t" style="left:162.80px;top:463px;line-height:21px;height:21px;color:#800000;font-size:13px;transform:scaleX(0.7672);transform-origin:0 50%;">Überfällig</span>
<div class="btn" style="left:211px;top:465px;width:67px;height:17px"></div>
<svg style="left:223.9px;top:468px" width="12" height="11" viewBox="-1 -1 12 11"><path d="M0.7 4.5 L3.7 7.8 L9.3 0.7" fill="none" stroke="#000" stroke-width="1.9" stroke-linejoin="miter"/></svg>
<span class="t" style="left:239.90px;top:463px;line-height:21px;height:21px;color:#000080;font-size:13px;transform:scaleX(0.7968);transform-origin:0 50%;">Offen</span>
<div class="btn" style="left:280px;top:465px;width:67px;height:17px"></div>
<svg style="left:283.9px;top:468px" width="12" height="11" viewBox="-1 -1 12 11"><path d="M0.7 4.5 L3.7 7.8 L9.3 0.7" fill="none" stroke="#000" stroke-width="1.9" stroke-linejoin="miter"/></svg>
<span class="t" style="left:299.60px;top:463px;line-height:21px;height:21px;color:#008000;font-size:13px;transform:scaleX(0.7888);transform-origin:0 50%;">Gemahnt</span>
<div style="left:350px;top:463px;width:1px;height:21px;background:#c8c8c8;"></div>
<div style="left:827px;top:463px;width:1px;height:21px;background:#a8a8a8;"></div>
<div style="left:828px;top:463px;width:84px;height:21px;background:#ffffff;"></div>
<span class="t" style="left:831.30px;top:463px;line-height:21px;height:21px;color:#000;font-size:13px;transform:scaleX(0.7845);transform-origin:0 50%;">&lt;Alle Felder&gt;</span>
<div style="left:912px;top:464px;width:15px;height:19px;box-sizing:border-box;border:1px solid #c2c2c2;border-radius:3px;background:#fff"></div>
<svg style="left:915px;top:472px" width="9" height="4" viewBox="0 0 9 4"><path d="M0.5 0 L8.5 0 L4.5 4 Z" fill="#000"/></svg>
<div style="left:928px;top:463px;width:1px;height:21px;background:#a8a8a8;"></div>
<div style="left:929px;top:463px;width:84px;height:21px;background:#ffffff;"></div>
<div style="left:1013px;top:464px;width:15px;height:19px;box-sizing:border-box;border:1px solid #c2c2c2;border-radius:3px;background:#fff"></div>
<svg style="left:1014px;top:466.8px" width="14" height="14" viewBox="0 0 14 14"><defs><radialGradient id="sph" cx="0.38" cy="0.32" r="0.7"><stop offset="0" stop-color="#9fd0ff"/><stop offset="0.45" stop-color="#2b7cf0"/><stop offset="1" stop-color="#0a3fb8"/></radialGradient></defs><circle cx="7" cy="7" r="5.1" fill="url(#sph)"/></svg>
<svg style="left:907px;top:479px" width="4" height="4" viewBox="0 0 4 4"><path d="M4 0 L4 4 L0 4 Z" fill="#6a6a6a"/></svg>
<svg style="left:1008px;top:479px" width="4" height="4" viewBox="0 0 4 4"><path d="M4 0 L4 4 L0 4 Z" fill="#6a6a6a"/></svg>
</div></body></html>
